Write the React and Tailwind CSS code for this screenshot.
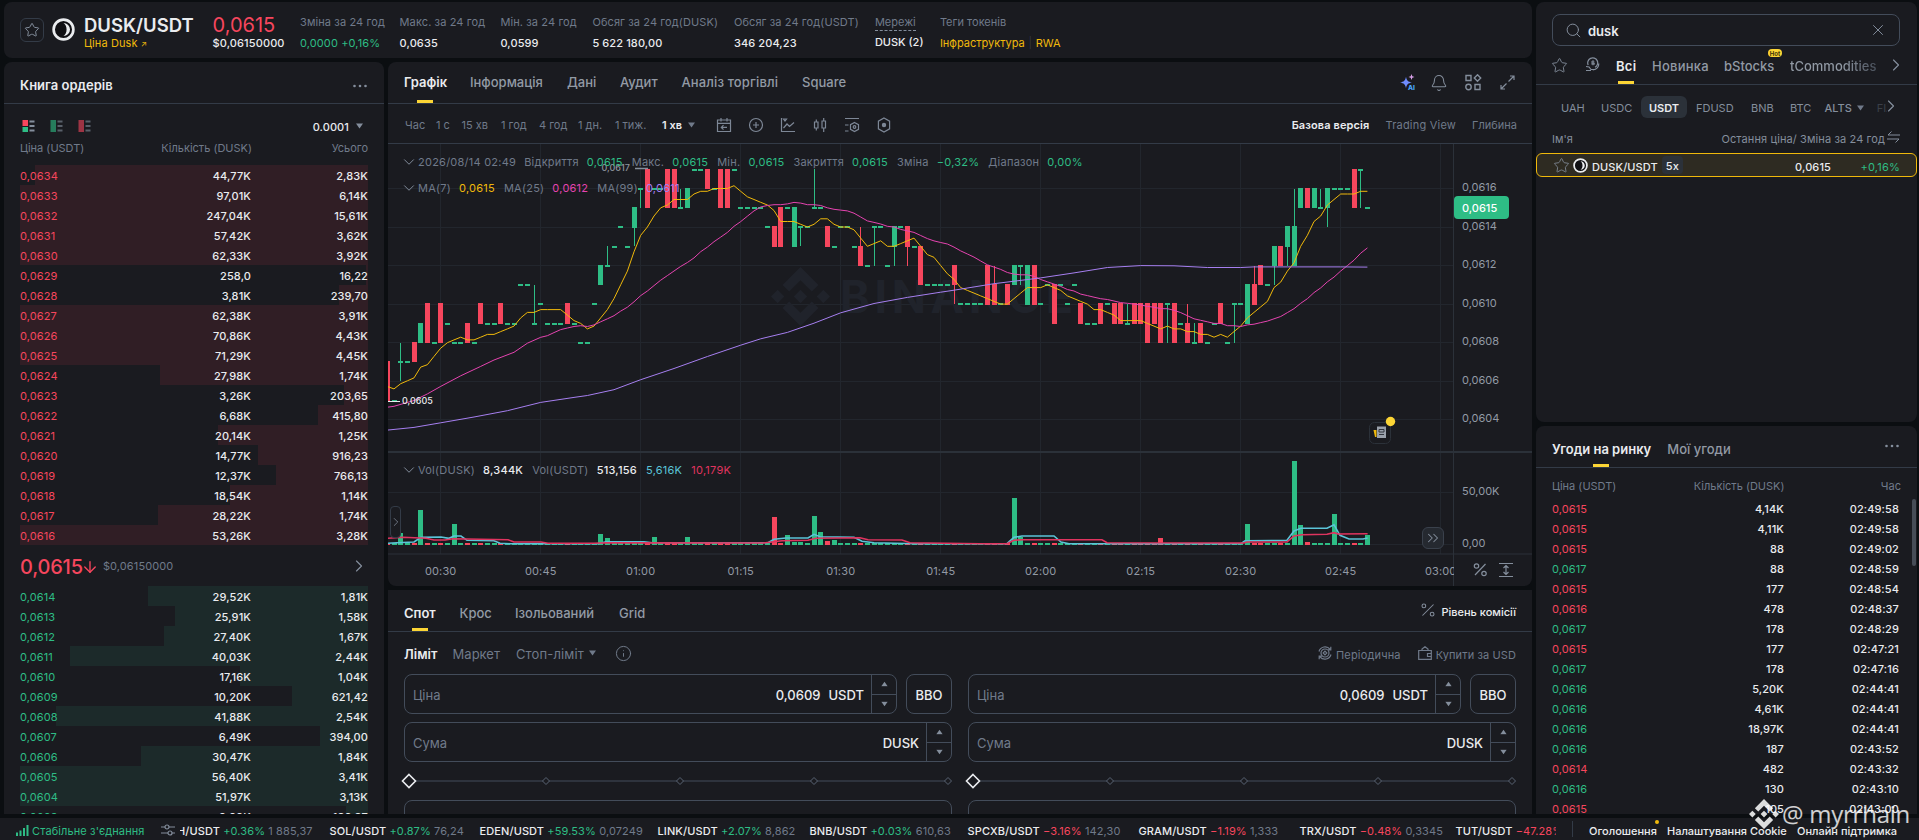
import React from 'react';
import { Star, Search, X, ChevronRight, ChevronDown, ChevronsRight, Bell, Percent, Info, ArrowDown } from 'lucide-react';

const ASKS = [
  ['0,0634', '44,77K', '2,83K', 333], ['0,0633', '97,01K', '6,14K', 348], ['0,0632', '247,04K', '15,61K', 348],
  ['0,0631', '57,42K', '3,62K', 348], ['0,0630', '62,33K', '3,92K', 348], ['0,0629', '258,0', '16,22', 2],
  ['0,0628', '3,81K', '239,70', 29], ['0,0627', '62,38K', '3,91K', 348], ['0,0626', '70,86K', '4,43K', 348],
  ['0,0625', '71,29K', '4,45K', 348], ['0,0624', '27,98K', '1,74K', 208], ['0,0623', '3,26K', '203,65', 24],
  ['0,0622', '6,68K', '415,80', 50], ['0,0621', '20,14K', '1,25K', 150], ['0,0620', '14,77K', '916,23', 110],
  ['0,0619', '12,37K', '766,13', 92], ['0,0618', '18,54K', '1,14K', 138], ['0,0617', '28,22K', '1,74K', 210],
  ['0,0616', '53,26K', '3,28K', 348],
];

const BIDS = [
  ['0,0614', '29,52K', '1,81K', 220], ['0,0613', '25,91K', '1,58K', 193], ['0,0612', '27,40K', '1,67K', 204],
  ['0,0611', '40,03K', '2,44K', 298], ['0,0610', '17,16K', '1,04K', 128], ['0,0609', '10,20K', '621,42', 76],
  ['0,0608', '41,88K', '2,54K', 312], ['0,0607', '6,49K', '394,00', 48], ['0,0606', '30,47K', '1,84K', 227],
  ['0,0605', '56,40K', '3,41K', 348], ['0,0604', '51,97K', '3,13K', 348], ['0,0603', '3,00K', '180,87', 22],
];

const TRADES = [
  ['0,0615', '4,14K', '02:49:58', 's'], ['0,0615', '4,11K', '02:49:58', 's'], ['0,0615', '88', '02:49:02', 's'],
  ['0,0617', '88', '02:48:59', 'b'], ['0,0615', '177', '02:48:54', 's'], ['0,0616', '478', '02:48:37', 's'],
  ['0,0617', '178', '02:48:29', 'b'], ['0,0615', '177', '02:47:21', 's'], ['0,0617', '178', '02:47:16', 'b'],
  ['0,0616', '5,20K', '02:44:41', 'b'], ['0,0616', '4,61K', '02:44:41', 'b'], ['0,0616', '18,97K', '02:44:41', 'b'],
  ['0,0616', '187', '02:43:52', 'b'], ['0,0614', '482', '02:43:32', 's'], ['0,0616', '130', '02:43:10', 'b'],
  ['0,0615', '105', '02:43:00', 's'],
];

const TICKERS = [
  ['SOL/USDT', '+0.87%', '76,24', 'w-[150px]'], ['EDEN/USDT', '+59.53%', '0,07249', 'w-[178px]'],
  ['LINK/USDT', '+2.07%', '8,862', 'w-[152px]'], ['BNB/USDT', '+0.03%', '610,63', 'w-[158px]'],
  ['SPCXB/USDT', '−3.16%', '142,30', 'w-[171px]'], ['GRAM/USDT', '−1.19%', '1,333', 'w-[161px]'],
  ['TRX/USDT', '−0.48%', '0,3345', 'w-[156px]'], ['TUT/USDT', '−47.28%', '0,0101', 'w-[160px]'],
];

// [minute, open, close, high?, low?], prices in 0.0001 USDT
const CANDLES = [
  [22, 607, 605], [23, 605, 605], [24, 607, 607, 608, 606], [25, 607, 607], [26, 608, 607], [27, 608, 609],
  [28, 610, 608], [29, 608, 608], [30, 610, 608], [31, 609, 609], [32, 608, 608], [33, 608, 608], [34, 609, 608],
  [35, 608, 608], [36, 610, 609], [37, 609, 609], [38, 609, 609], [39, 610, 609], [40, 609, 609], [41, 609, 609],
  [42, 611, 611], [43, 611, 611], [44, 609, 609, 611], [45, 610, 610], [46, 609, 609], [47, 609, 609],
  [48, 609, 609], [49, 610, 609], [50, 609, 609], [51, 608, 608], [52, 608, 608], [53, 610, 610], [54, 611, 612],
  [55, 612, 612, 613], [56, 613, 613], [57, 614, 614], [58, 613, 613], [59, 614, 615, 615, 613],
  [60, 616, 616, 616, 615], [61, 617, 615], [62, 616, 616], [63, 616, 616], [64, 617, 615], [65, 617, 615],
  [66, 615, 615, 616], [67, 615, 616], [68, 617, 617], [69, 617, 617], [70, 617, 616], [71, 616, 616],
  [72, 617, 615], [73, 617, 615], [74, 617, 617], [75, 615, 615], [76, 615, 615], [77, 615, 615], [78, 615, 615],
  [79, 614, 614], [80, 614, 613], [81, 615, 613], [82, 615, 615], [83, 613, 615], [84, 614, 614, 614, 613],
  [85, 614, 614], [86, 615, 615, 617], [87, 615, 615], [88, 614, 613], [89, 613, 613], [90, 614, 614],
  [91, 614, 614], [92, 613, 613], [93, 613, 612, 614], [94, 612, 612], [95, 614, 614, 614, 612], [96, 614, 614],
  [97, 612, 612], [98, 613, 614, 614, 612], [99, 614, 614], [100, 614, 613, 614, 612], [101, 613, 613],
  [102, 613, 611], [103, 611, 611], [104, 611, 611], [105, 611, 611], [106, 611, 611], [107, 612, 611, 612, 610],
  [108, 610, 610], [109, 610, 610], [110, 610, 610], [111, 610, 610], [112, 612, 610], [113, 611, 610, 612],
  [114, 610, 610], [115, 611, 610], [116, 611, 612], [117, 612, 612, 612, 611], [118, 610, 612], [119, 612, 610],
  [120, 610, 610], [121, 611, 611], [122, 611, 609], [123, 611, 611], [124, 610, 610], [125, 611, 611],
  [126, 610, 609], [127, 609, 609], [128, 609, 609], [129, 610, 609], [130, 610, 610], [131, 610, 609],
  [132, 610, 609], [133, 609, 609, 610], [134, 610, 609], [135, 610, 609], [136, 610, 608], [137, 610, 609],
  [138, 610, 608], [139, 610, 610, 610, 608], [140, 610, 608], [141, 609, 609], [142, 609, 608, 610],
  [143, 608, 608, 609], [144, 609, 608], [145, 608, 608], [146, 609, 609], [147, 610, 609], [148, 608, 608],
  [149, 610, 610, 610, 608], [150, 610, 610], [151, 609, 611], [152, 611, 610, 612], [153, 612, 611],
  [154, 611, 611], [155, 612, 613, 613, 611], [156, 613, 612], [157, 613, 614, 614, 612], [158, 612, 614, 616],
  [159, 615, 616], [160, 616, 615], [161, 615, 616], [162, 615, 615, 616], [163, 615, 616, 616, 614],
  [164, 616, 616], [165, 616, 616], [166, 616, 616], [167, 617, 615], [168, 617, 617, 617, 615], [169, 615, 615],
];

// volume bars that stand out, minute -> [height, red?]
const VOLUME = {
  24: [12], 27: [35], 32: [21.5], 54: [10.7], 55: [7], 62: [8], 67: [8.5], 80: [28, 1], 82: [10], 83: [3.5], 84: [3.5],
  86: [28.7], 87: [12.7], 88: [4, 1], 89: [5], 116: [47.5], 117: [8.5], 138: [7, 1], 151: [21.5], 158: [84],
  159: [20.5], 160: [3, 1], 164: [31.5], 169: [10],
};

const MA25_HEAD = [[22, 604.65], [23, 604.7], [26, 605.0], [28, 605.34], [30, 605.73], [33, 606.28], [36, 606.77], [38, 607.1], [41, 607.5], [43, 607.97], [45, 608.28]];
const MA99 = [[22, 603.46], [26, 603.6], [30, 603.84], [35, 604.14], [40, 604.47], [45, 604.9], [50, 605.16], [52, 605.26], [56, 605.56], [60, 606.08], [65, 606.66], [70, 607.28], [75, 607.87], [78, 608.2], [82, 608.53], [86, 609.01], [90, 609.55], [95, 610.03], [100, 610.35], [105, 610.62], [107, 610.72], [113, 611.06], [120, 611.36], [125, 611.62], [130, 611.9], [135, 612.0], [140, 611.99], [145, 611.9], [150, 611.9], [152, 611.93], [157, 611.93], [165, 611.93], [169, 611.92]];

const VOL_FAST = '0,399.3 9,398.7 26,398 33,393.3 53,393 61,394.3 66,392 73,392 79,396.3 106,396.7 112,399.3 122,399.7 210,399.7 218,397.7 256,397.7 264,398.7 380,398.7 386,395.3 398,394 420,394 426,390.3 432,392.7 466,393.3 474,397.3 486,398.7 528,399.7 619,399.7 626,393.3 634,392 666,392 673,398 681,399.7 853,399.7 857,396.7 899,396.3 906,387 913,384.3 939,384.3 946,380.7 952,391.3 961,395 975,395 979.6,394';
const VOL_SLOW = '0,394.3 15,393.3 38,394.3 46,396 57,396 65,394.7 120,395.7 126,398 153,398 160,399.3 206,399.3 218,398.7 375,399 384,398 394,396.7 420,396.3 428,394.3 472,393.7 480,395.7 514,396 522,398.7 592,399.7 619,399.7 626,396.3 634,395.7 714,395.7 719,398.7 856,399 859,398 899,398 906,392 914,390.7 939,390.3 946,388.7 950,390 979.6,389.7';

const xAt = (t) => 52.7 + (t - 30) * 6.6667;
const yAt = (p) => 44.5 + (616 - p) * 19.27;

const closeAt = (t) => CANDLES[t - 22][2];
const average = (n) => {
  const out = [];
  for (let t = 22 + n - 1; t <= 169; t++) {
    let sum = 0;
    for (let k = 0; k < n; k++) sum += closeAt(t - k);
    out.push([t, sum / n]);
  }
  return out;
};
const toPoints = (list) => list.map(([t, p]) => `${xAt(t).toFixed(1)},${yAt(p).toFixed(1)}`).join(' ');

const MA7 = [[21.8, 605.75], [23, 605.6], [24, 605.87], [25, 606.02], [26, 606.17], [27, 606.73], ...average(7)];
const MA25 = [...MA25_HEAD, ...average(25)];

const Caret = ({ className = '' }) => (
  <svg width="9" height="6" viewBox="0 0 8 6" className={`shrink-0 ${className}`}><path d="M0.5 0.5h7L4 5.5z" fill="currentColor" /></svg>
);

const Dots = () => (
  <svg width="14" height="4" viewBox="0 0 14 4" fill="#848e9c" className="mr-px"><circle cx="1.5" cy="2" r="1.3" /><circle cx="7" cy="2" r="1.3" /><circle cx="12.5" cy="2" r="1.3" /></svg>
);

const DuskLogo = ({ size }) => (
  <svg width={size} height={size} viewBox="0 0 24 24">
    <circle cx="12" cy="12" r="10.3" fill="#101014" stroke="#eaecef" strokeWidth="2.8" />
    <path d="M12 5.2a6.8 6.8 0 0 1 0 13.6c2.2-1.6 3.2-4 3.2-6.8S14.2 6.8 12 5.2z" fill="#eaecef" />
  </svg>
);

const BinanceMark = ({ x, y, size, fill }) => (
  <svg x={x} y={y} width={size} height={size} viewBox="0 0 24 24" fill={fill}>
    <path d="M12 0l7.3 7.3-2.7 2.7L12 5.4 7.4 10 4.7 7.3zM2.7 9.3L5.4 12l-2.7 2.7L0 12zM12 9.3l2.7 2.7-2.7 2.7L9.3 12zM21.3 9.3L24 12l-2.7 2.7L18.6 12zM12 18.6l4.6-4.6 2.7 2.7L12 24l-7.3-7.3L7.4 14z" />
  </svg>
);

const Stat = ({ label, className = '', children }) => (
  <div className={`whitespace-nowrap ${className}`}>
    <div className="text-[#707a8a]">{label}</div>
    <div className="mt-[5px] font-medium text-[#eaecef]">{children}</div>
  </div>
);

const PairHeader = () => (
  <header className="flex h-14 items-start rounded-lg bg-[#1a1b20] pt-3 pl-4 text-[11px] leading-4">
    <button className="mt-1 flex h-6 w-6 items-center justify-center rounded-md border border-[#333b47]">
      <Star size={16} strokeWidth={1.5} className="shrink-0 text-[#848e9c]" />
    </button>
    <div className="mt-1 ml-2 w-6"><DuskLogo size={23} /></div>
    <div className="ml-2 w-[128.6px]">
      <h1 className="-mt-0.5 text-[18.5px] leading-[26px] font-semibold text-[#eaecef]">DUSK/USDT</h1>
      <div className="-mt-[3px] tracking-[0.01em] text-[#f0b90b]">Ціна Dusk <span className="text-[8px]">↗</span></div>
    </div>
    <div className="w-[87.4px]">
      <div className="-mt-0.5 text-[20px] leading-[26px] text-[#f6465d]">0,0615</div>
      <div className="-mt-[3px] font-medium tracking-[0.01em] text-[#eaecef]">$0,06150000</div>
    </div>
    <Stat className="w-[99.6px] tracking-[0.01em]" label="Зміна за 24 год"><span className="font-normal text-[#2ebd85]">0,0000 +0,16%</span></Stat>
    <Stat className="w-[100.8px] tracking-[0.01em]" label="Макс. за 24 год">0,0635</Stat>
    <Stat className="w-[92px] tracking-[0.01em]" label="Мін. за 24 год">0,0599</Stat>
    <Stat className="w-[141.5px] tracking-[0.01em]" label="Обсяг за 24 год(DUSK)">5 622 180,00</Stat>
    <Stat className="w-[141px] tracking-[0.01em]" label="Обсяг за 24 год(USDT)">346 204,23</Stat>
    <div className="w-[65px]">
      <span className="block w-fit border-b border-dashed border-[#848e9c] text-[#707a8a]">Мережі</span>
      <span className="mt-[3px] block font-medium text-[#eaecef]">DUSK (2)</span>
    </div>
    <Stat label="Теги токенів"><span className="font-normal text-[#f0b90b]">Інфраструктура<span className="px-1 font-thin text-[#707a8a]">|</span>RWA</span></Stat>
  </header>
);

const BookRow = ({ row, ask }) => (
  <div className="relative flex h-5 items-center pt-0.5">
    <div className={`absolute inset-y-0 right-0 ${ask ? 'bg-[#301e25]' : 'bg-[#1c2a2a]'}`} style={{ width: row[3] }} />
    <span className={`relative w-24 ${ask ? 'text-[#f6465d]' : 'text-[#2ebd85]'}`}>{row[0]}</span>
    <span className="relative w-[135px] text-right font-medium">{row[1]}</span>
    <span className="relative flex-1 text-right font-medium">{row[2]}</span>
  </div>
);

const BookIcon = ({ top, bottom, dim }) => (
  <svg width="13" height="13" viewBox="0 0 13 13" className={dim ? 'opacity-60' : ''}>
    <rect x="0.5" y="0" width="5.5" height="6" fill={top} /><rect x="0.5" y={dim ? 6 : 7} width="5.5" height={dim ? 6 : 5} fill={bottom} />
    <path d="M7.5 1.5h5M7.5 6h5M7.5 10.5h5" stroke="#848e9c" strokeWidth="2" />
  </svg>
);

const OrderBook = () => (
  <section className="h-[752px] w-[380px] overflow-hidden rounded-t-lg bg-[#1a1b20] text-[11px] tracking-[0.01em] text-[#eaecef]">
    <div className="flex h-[42px] items-center justify-between border-b border-[#333b47] px-4 pt-[7px]">
      <h2 className="text-[13px] font-semibold tracking-normal">Книга ордерів</h2>
      <Dots />
    </div>
    <div className="px-4">
      <div className="flex h-[29px] items-end gap-[15px] pl-0.5">
        <BookIcon top="#f6465d" bottom="#2ebd85" />
        <BookIcon top="#2ebd85" bottom="#2ebd85" dim />
        <BookIcon top="#f6465d" bottom="#f6465d" dim />
        <span className="-mb-0.5 ml-auto flex items-center pr-1 font-medium">0.0001 <Caret className="mb-0.5 ml-1.5 text-[#848e9c]" /></span>
      </div>
      <div className="mt-1 mb-[5px] flex h-[23px] items-center tracking-normal text-[#707a8a]">
        <span className="w-24">Ціна (USDT)</span>
        <span className="w-[136px] text-right">Кількість (DUSK)</span>
        <span className="flex-1 text-right">Усього</span>
      </div>
      <div>{ASKS.map((r) => <BookRow key={r[0]} row={r} ask />)}</div>
      <div className="flex h-[41px] items-center pt-0.5">
        <span className="text-[20px] font-medium tracking-[-0.01em] text-[#f6465d]">0,0615</span>
        <ArrowDown size={18} strokeWidth={1.8} className="-mx-0.5 text-[#f6465d]" />
        <span className="ml-1.5 tracking-[0.01em] text-[#707a8a]">$0,06150000</span>
        <ChevronRight size={20} strokeWidth={1.4} className="-mr-px mb-0.5 ml-auto text-[#848e9c]" />
      </div>
      <div>{BIDS.map((r) => <BookRow key={r[0]} row={r} />)}</div>
    </div>
  </section>
);

const Tab = ({ active, className = '', bar = 'left-3', children }) => (
  <span className={`relative whitespace-nowrap ${active ? 'font-semibold text-[#eaecef]' : 'font-medium text-[#929aa5]'} ${className}`}>
    {children}
    {active && <i className={`absolute h-[3px] w-4 bg-[#fcd535] ${bar}`} />}
  </span>
);

const ToolIcon = ({ children }) => (
  <svg width="16" height="16" viewBox="0 0 16 16" fill="none" stroke="#7d8796" strokeWidth="1.2">{children}</svg>
);

const ChartTools = () => (
  <div className="ml-5 flex items-center gap-4 pb-0.5">
    <ToolIcon><path d="M1.5 3h13v11.5h-13zM1.5 6.3h13M5 1v3.5M11 1v3.5M11 10.4H5.5M7.5 8.2L5.3 10.4l2.2 2.2" /></ToolIcon>
    <ToolIcon><circle cx="8" cy="8" r="6.5" /><path d="M8 5v6M5 8h6" /></ToolIcon>
    <ToolIcon><path d="M1.5 1v13.5H15M3.5 11L7 7l2.500 2.500L14 5.500M3.500 2h3L5 4z" /></ToolIcon>
    <ToolIcon><path d="M2.5 5H6v6H2.5zM4.300 2.500V5M4.300 11v2.500M10 4h3.500v7H10zM11.700 1v3M11.700 11v4" /></ToolIcon>
    <ToolIcon><path d="M1 1.5h14M1 8h3.500M1 14h3.500M10.500 5.500l4 2.200v4.600l-4 2.200-4-2.200V7.700z" /><circle cx="10.5" cy="10" r="1.3" /></ToolIcon>
    <ToolIcon><path d="M8 .9l5.600 3.300v7.600L8 15.100l-5.600-3.300V4.200z" /><circle cx="8" cy="8" r="1.6" fill="#7d8796" /></ToolIcon>
  </div>
);

const Legend = ({ label, value, className = 'text-[#2ebd85]' }) => (
  <><span className="mr-2 text-[#707a8a]">{label}</span><span className={`mr-[9px] ${className}`}>{value}</span></>
);

const LegendRow = ({ className, children }) => (
  <div className={`absolute left-4 flex h-[18px] items-center text-[11px] tracking-[0.022em] whitespace-nowrap ${className}`}>
    <ChevronDown size={18} strokeWidth={1.3} className="-ml-1 text-[#848e9c]" />
    {children}
  </div>
);

const Chart = () => {
  const times = ['00:30', '00:45', '01:00', '01:15', '01:30', '01:45', '02:00', '02:15', '02:30', '02:45', '03:00'];
  const prices = ['0,0616', '0,0614', '0,0612', '0,0610', '0,0608', '0,0606', '0,0604'];
  return (
    <div className="relative h-[442px]">
      <svg width="1144" height="442" viewBox="0 0 1144 442" fontFamily="Inter, sans-serif" fontSize="11">
        <defs>
          <clipPath id="plot"><rect x="0" y="0" width="1066" height="442" /></clipPath>
        </defs>
        <g stroke="#22262d" strokeWidth="1">
          {times.map((t, i) => <line key={t} x1={52.5 + i * 100} x2={52.5 + i * 100} y1="0" y2="410" />)}
          {prices.map((p, i) => <line key={p} x1="0" x2="1066" y1={44.5 + Math.round(i * 38.54)} y2={44.5 + Math.round(i * 38.54)} />)}
          <line x1="0" x2="1066" y1="348.5" y2="348.5" />
          <line x1="0" x2="1066" y1="400.5" y2="400.5" />
        </g>
        <BinanceMark x="383" y="123" size="59" fill="#20232b" />
        <text x="452" y="169" fontSize="45" fontWeight="700" textLength="233" fill="#20232b">BINANCE</text>

        <g clipPath="url(#plot)" shapeRendering="crispEdges">
          {CANDLES.map(([t, o, c, h = Math.max(o, c), l = Math.min(o, c)]) => {
            const color = c < o ? '#f6465d' : '#2ebd85';
            const top = yAt(Math.max(o, c));
            const x = xAt(t);
            return (
              <g key={t} fill={color}>
                {h !== l && <rect x={x - 0.5} y={yAt(h)} width="1" height={yAt(l) - yAt(h)} />}
                <rect x={x - 2.5} y={top - 0.7} width="5" height={Math.max(2, yAt(Math.min(o, c)) - top + 1.2)} />
              </g>
            );
          })}
          {CANDLES.map(([t, o, c]) => {
            const [h, red] = VOLUME[t] || [2];
            const isRed = VOLUME[t] ? red : c < o;
            return <rect key={t} x={xAt(t) - 2.5} y={401 - h} width="5" height={h} fill={isRed ? '#f6465d' : '#2ebd85'} />;
          })}
        </g>
        <g fill="none" strokeWidth="1" clipPath="url(#plot)">
          <polyline points={toPoints(MA7)} stroke="#f0b90b" />
          <polyline points={toPoints(MA25)} stroke="#e544b0" />
          <polyline points={toPoints(MA99)} stroke="#a67ff0" />
          <polyline points={VOL_FAST} stroke="#5bc4d8" strokeWidth="1.6" />
          <polyline points={VOL_SLOW} stroke="#e0345f" strokeWidth="1.6" />
        </g>

        <path d="M247 24.5h13" stroke="#848e9c" strokeWidth="1.5" />
        <text x="213.5" y="27" fontSize="9" fontWeight="500" fill="#8d939c">0,0617</text>
        <path d="M0 257.5h12" stroke="#eaecef" />
        <text x="14" y="260" fontSize="9" fontWeight="500" fill="#eaecef">0,0605</text>

        <rect x="0" y="307" width="1144" height="2" fill="#2b3139" />
        <rect x="0" y="409.5" width="1144" height="1" fill="#2b3139" />
        <rect x="1065" y="0" width="1" height="442" fill="#2b3139" />

        <g fill="#929aa5">
          {prices.map((p, i) => <text key={p} x="1074" y={47.3 + i * 38.5}>{p}</text>)}
          <text x="1074" y="351">50,00K</text>
          <text x="1074" y="403">0,00</text>
          <g clipPath="url(#plot)">
            {times.map((t, i) => <text key={t} x={52.7 + i * 100} y="431" textAnchor="middle" letterSpacing="0.15">{t}</text>)}
          </g>
        </g>
        <rect x="1066" y="52" width="55" height="23" rx="4" fill="#2ebd85" />
        <text x="1074" y="68.3" fontWeight="500" fill="#fff">0,0615</text>
        <g stroke="#848e9c" strokeWidth="1.2" fill="none">
          <circle cx="1088.5" cy="422" r="2.2" /><circle cx="1096" cy="429.5" r="2.2" /><path d="M1097.5 420L1087 431" />
          <path d="M1111 419.5h14M1111 432.5h14M1118 421.5v9M1115.5 424l2.500-2.500 2.500 2.500M1115.5 428l2.500 2.500 2.500-2.500" />
        </g>
        <rect x="981.5" y="278.5" width="21" height="21" rx="5" fill="#1a1b20" stroke="#2b3139" />
        <path d="M985.5 286h3v7H987z" fill="#f0b90b" />
        <path d="M989 282.5h9V294h-9z" fill="#9aa1ab" /><path d="M991 285.5h5v2.500h-5zM991 290.5h5" stroke="#33373f" fill="none" />
        <circle cx="1002.5" cy="277.5" r="4.7" fill="#fcd535" />
      </svg>

      <LegendRow className="top-[9px]">
        <span className="mr-2 text-[#707a8a]">2026/08/14 02:49</span>
        <Legend label="Відкриття" value="0,0615" />
        <Legend label="Макс." value="0,0615" />
        <Legend label="Мін." value="0,0615" />
        <Legend label="Закриття" value="0,0615" />
        <Legend label="Зміна" value="−0,32%" />
        <Legend label="Діапазон" value="0,00%" />
      </LegendRow>
      <LegendRow className="top-[35px]">
        <Legend label="MA(7)" value="0,0615" className="text-[#f0b90b]" />
        <Legend label="MA(25)" value="0,0612" className="text-[#e544b0]" />
        <Legend label="MA(99)" value="0,0611" className="text-[#a67ff0]" />
      </LegendRow>
      <LegendRow className="top-[317px]">
        <Legend label="Vol(DUSK)" value="8,344K" className="font-medium text-[#eaecef]" />
        <Legend label="Vol(USDT)" value="513,156" className="font-medium text-[#eaecef]" />
        <span className="mr-[9px] text-[#5bc4d8]">5,616K</span>
        <span className="text-[#e0345f]">10,179K</span>
      </LegendRow>
      <button className="absolute top-[362px] left-0.5 flex h-8 w-[11px] items-center justify-center rounded border border-[#333b47] bg-[#1a1b20]">
        <ChevronRight size={14} strokeWidth={1.3} className="shrink-0 text-[#848e9c]" />
      </button>
      <button className="absolute top-[383px] left-[1034px] flex h-[22px] w-[22px] items-center justify-center rounded-md border border-[#3a414c] bg-[#252930]">
        <ChevronsRight size={18} strokeWidth={1.4} className="shrink-0 text-[#848e9c]" />
      </button>
    </div>
  );
};

const ChartPanel = () => (
  <section className="h-[524px] overflow-hidden rounded-lg bg-[#1a1b20]">
    <div className="flex h-[42px] items-center gap-6 border-b border-[#333b47] pr-[17px] pl-4 text-[13px]">
      <Tab active className="w-[42px]" bar="left-[13px] top-[27px]">Графік</Tab>
      <Tab className="w-[73px]">Інформація</Tab>
      <Tab className="w-[29px]">Дані</Tab>
      <Tab className="w-[37.5px]">Аудит</Tab>
      <Tab className="w-[96.5px] tracking-[0.01em]">Аналіз торгівлі</Tab>
      <Tab>Square</Tab>
      <div className="ml-auto flex items-center text-[#848e9c]">
        <svg width="17" height="17" viewBox="0 0 17 17">
          <path d="M7 2.5c.6 4 2 5.400 6 6-4 .6-5.400 2-6 6-.6-4-2-5.400-6-6 4-.6 5.400-2 6-6z" fill="#6f8cff" />
          <path d="M12.5 0l.8 2.200 2.200.8-2.200.8-.8 2.200-.8-2.200-2.200-.8 2.200-.8z" fill="#d9a1e8" />
          <text x="9" y="15.5" fontSize="6.5" fontWeight="800" fill="#4aa8ff">AI</text>
        </svg>
        <Bell size={18} strokeWidth={1.4} className="ml-[14px]" />
        <svg width="18" height="17" viewBox="0 0 18 17" fill="none" stroke="currentColor" strokeWidth="1.4" className="ml-4">
          <path d="M2 1.5h5v5H2zM11 10.5h5v5h-5zM13.500 .8l3.200 3.200-3.200 3.200L10.300 4z" /><circle cx="4.5" cy="13" r="2.7" />
        </svg>
        <svg width="15" height="15" viewBox="0 0 15 15" fill="none" stroke="currentColor" strokeWidth="1.2" className="ml-[18px]">
          <path d="M10 1h4v4M14 1L8.500 6.500M5 14H1v-4M1 14l5.500-5.500" />
        </svg>
      </div>
    </div>
    <div className="flex h-10 items-center border-b border-[#333b47] pt-1 pr-[15px] pl-[17px] text-[11px] whitespace-nowrap text-[#707a8a]">
      <span className="w-[31px]">Час</span>
      <span className="w-[25.5px]">1 с</span>
      <span className="w-[39.5px]">15 хв</span>
      <span className="w-[38px]">1 год</span>
      <span className="w-[39px]">4 год</span>
      <span className="w-[37px]">1 дн.</span>
      <span className="w-[47px]">1 тиж.</span>
      <span className="font-semibold text-[#eaecef]">1 хв</span>
      <Caret className="mb-0.5 ml-[5px]" />
      <ChartTools />
      <span className="ml-auto font-semibold tracking-[0.01em] text-[#eaecef]">Базова версія</span>
      <span className="ml-4 tracking-[0.02em]">Trading View</span>
      <span className="ml-4">Глибина</span>
    </div>
    <Chart />
  </section>
);

const Stepper = () => (
  <div className="flex h-full w-[25px] flex-col border-l border-[#434c5a] text-[#848e9c]">
    <div className="flex flex-1 items-center justify-center border-b border-[#434c5a]"><Caret className="scale-90 rotate-180" /></div>
    <div className="flex flex-1 items-center justify-center"><Caret className="scale-90" /></div>
  </div>
);

const Field = ({ label, value, unit, className = '' }) => (
  <div className={`flex h-10 flex-1 items-center rounded-lg border border-[#434c5a] pl-2 ${className}`}>
    <span className="pt-1 text-[#707a8a]">{label}</span>
    <span className="ml-auto pt-1 font-medium">{value}</span>
    <span className="mr-[7px] ml-2 pt-1 font-medium">{unit}</span>
    <Stepper />
  </div>
);

const OrderForm = () => (
  <div className="flex-1">
    <div className="flex gap-[9px]">
      <Field label="Ціна" value="0,0609" unit="USDT" />
      <button className="h-10 w-[46px] rounded-lg border border-[#434c5a] pt-1 font-medium">BBO</button>
    </div>
    <Field label="Сума" unit="DUSK" className="mt-2" />
    <svg width="548" height="16" viewBox="0 0 548 16" className="mt-[11px] block overflow-visible" fill="#1a1b20">
      <path d="M6 8h538" stroke="#434c5a" />
      {[142, 276, 410, 544].map((x) => <path key={x} d={`M${x} 4.5l3.5 3.5-3.5 3.5-3.5-3.5z`} stroke="#5a6473" />)}
      <path d="M5 1.5L11.5 8 5 14.5-1.5 8z" stroke="#eaecef" strokeWidth="1.6" />
    </svg>
    <div className="mt-[11px] h-10 rounded-lg border border-[#434c5a]" />
  </div>
);

const TradePanel = () => (
  <section className="h-[224px] overflow-hidden bg-[#1a1b20] text-[13px] text-[#eaecef]">
    <div className="flex h-[42px] items-center gap-6 border-b border-[#333b47] pt-[7px] pr-4 pl-4">
      <Tab active className="w-[31.5px]" bar="left-2 top-[24px]">Спот</Tab>
      <Tab className="w-[31.5px]">Крос</Tab>
      <Tab className="w-20">Ізольований</Tab>
      <Tab>Grid</Tab>
      <span className="-mt-1 ml-auto flex items-center text-[11px] font-medium"><Percent size={18} strokeWidth={1.4} className="mr-1 -mt-1 text-[#848e9c]" />Рівень комісії</span>
    </div>
    <div className="flex h-[42px] items-center px-4 pt-1 text-[#707a8a]">
      <span className="w-[48.6px] font-semibold text-[#eaecef]">Ліміт</span>
      <span className="w-[63.4px]">Маркет</span>
      <span className="tracking-[0.01em]">Стоп-ліміт</span>
      <Caret className="mb-1 ml-1" />
      <Info size={17} strokeWidth={1.4} className="mb-1 ml-[18px]" />
      <div className="ml-auto flex items-center text-[11px]">
        <svg width="14" height="14" viewBox="0 0 14 14" fill="none" stroke="currentColor" strokeWidth="1.2" className="mb-1">
          <circle cx="7" cy="7" r="4" /><path d="M7 5.2L8.8 7 7 8.8 5.2 7zM1 5.5A6.3 6.3 0 0 1 12 3.2M12.8.8v3H10M13 8.500a6.300 6.300 0 0 1-11 2.300M1.200 13.200v-3H4" />
        </svg>
        <span className="ml-1 tracking-[0.015em]">Періодична</span>
        <svg width="14" height="14" viewBox="0 0 14 14" fill="none" stroke="currentColor" strokeWidth="1.2" className="mb-1 ml-[17px]">
          <path d="M.7 4.5h12.600v8.800H.7zM13.300 7.500H9.500v3h3.800M4 4.500V3L7 .7 10 3v1.500" />
        </svg>
        <span className="ml-1 tracking-[0.01em]">Купити за USD</span>
      </div>
    </div>
    <div className="flex gap-4 px-4">
      <OrderForm />
      <OrderForm />
    </div>
  </section>
);

const Markets = () => (
  <section className="h-[420px] overflow-hidden rounded-lg bg-[#1a1b20] pt-3 text-[11px] text-[#848e9c]">
    <div className="mr-[17px] ml-4 flex h-8 items-center rounded-lg border border-[#434c5a] px-3">
      <Search size={17} strokeWidth={1.4} />
      <span className="ml-1.5 pt-1 text-[13px] font-semibold text-[#eaecef]">dusk</span>
      <X size={18} strokeWidth={1.3} className="ml-auto" />
    </div>
    <div className="flex h-[39px] items-center border-b border-[#333b47] pt-1 pl-4 text-[13px]">
      <Star size={17} strokeWidth={1.3} className="-ml-px mb-1" />
      <svg width="15" height="15" viewBox="0 0 15 15" fill="none" stroke="currentColor" strokeWidth="1.2" className="mb-1.5 ml-[17px]">
        <path d="M3.2 8A5 5 0 1 1 10 10.300" /><path d="M8 3.200v5M6 5h3.500M10 6.800H6.300M13.800 6.500c0 4-3 6-6 6.500M1 9.500l3 .5 2 2.500h3M1 13.500h5" />
      </svg>
      <Tab active className="ml-4 w-9 tracking-[0.02em]" bar="left-0.5 top-[24px]">Всі</Tab>
      <Tab className="w-[72px] tracking-[0.02em]">Новинка</Tab>
      <Tab className="w-[66px]">bStocks
        <b className="absolute -top-2 left-11 flex h-2 w-[14px] items-center justify-center rounded-sm bg-[#fcd535] text-[6px] text-[#3b2f05]">Hot</b>
      </Tab>
      <span className="bg-gradient-to-r from-[#929aa5] from-60% to-[#4a515c] bg-clip-text font-medium text-transparent">tCommodities</span>
      <ChevronRight size={20} strokeWidth={1.4} className="mb-1 ml-2.5" />
    </div>
    <div className="flex h-[45px] items-center pt-0.5 pl-[25px] whitespace-nowrap">
      <span className="w-10">UAH</span>
      <span className="w-10">USDC</span>
      <span className="mb-1 flex h-[22px] w-[46px] items-center justify-center rounded-md bg-[#2b3139] pt-1 font-semibold text-[#eaecef]">USDT</span>
      <span className="ml-[9px] w-[55px]">FDUSD</span>
      <span className="w-[39px]">BNB</span>
      <span className="w-[34.5px]">BTC</span>
      <span className="font-medium">ALTS</span>
      <Caret className="mb-0.5 ml-1 text-[#707a8a]" />
      <span className="ml-3 w-2.5 overflow-hidden text-[#3a3f49]">FIA</span>
      <ChevronRight size={20} strokeWidth={1.4} className="mb-1.5 -ml-1.5" />
    </div>
    <div className="-mt-px flex h-5 items-center pr-[17px] pl-4">
      <span>Ім'я</span>
      <span className="ml-auto tracking-[0.01em]">Остання ціна/ Зміна за 24 год</span>
      <svg width="13" height="12" viewBox="0 0 13 12" fill="none" stroke="currentColor" className="mb-1 ml-0.5"><path d="M13 4H1L4.500 .5M0 8h12l-3.500 3.500" /></svg>
    </div>
    <div className="mt-1 flex h-6 items-center rounded-md border border-[#f0b90b] bg-[#2e2b22] pr-4 pl-4 text-[#eaecef]">
      <Star size={17} strokeWidth={1.2} className="text-[#848e9c]" />
      <span className="ml-[3px]"><DuskLogo size={15} /></span>
      <span className="ml-1 pt-1 font-medium tracking-[0.01em]">DUSK/USDT</span>
      <span className="ml-1 rounded-sm bg-[#2b3139] px-1 pt-0.5 leading-4 font-medium">5x</span>
      <span className="ml-auto w-20 pt-1 text-right font-medium tracking-[0.01em]">0,0615</span>
      <span className="w-[69px] pt-1 text-right tracking-[0.02em] text-[#2ebd85]">+0,16%</span>
    </div>
  </section>
);

const Trades = () => (
  <section className="relative h-[388px] overflow-hidden rounded-t-lg bg-[#1a1b20] text-[11px] text-[#eaecef]">
    <div className="flex h-[42px] items-center border-b border-[#333b47] pt-[7px] pr-[17px] pl-4 text-[13px]">
      <Tab active className="mr-4" bar="left-[41px] top-[24px]">Угоди на ринку</Tab>
      <Tab>Мої угоди</Tab>
      <span className="mb-2 ml-auto"><Dots /></span>
    </div>
    <div className="px-4">
      <div className="flex h-[31px] items-center pt-1.5 text-[#707a8a]">
        <span className="w-24">Ціна (USDT)</span>
        <span className="w-[136.5px] text-right">Кількість (DUSK)</span>
        <span className="flex-1 text-right">Час</span>
      </div>
      {TRADES.map((r, i) => (
        <div key={i} className="flex h-5 items-center pt-px tracking-[0.01em]">
          <span className={r[3] === 's' ? 'w-24 text-[#f6465d]' : 'w-24 text-[#2ebd85]'}>{r[0]}</span>
          <span className="w-[136px] text-right font-medium">{r[1]}</span>
          <span className="flex-1 pr-0.5 text-right font-medium">{r[2]}</span>
        </div>
      ))}
    </div>
    <div className="absolute top-[73px] right-px h-[67px] w-1 rounded-full bg-[#474d57]" />
  </section>
);

const StatusBar = () => (
  <footer className="mt-1 flex h-[22px] items-center bg-[#1a1b20] pt-1 pl-4 text-[11px] whitespace-nowrap text-[#eaecef]">
    <svg width="13" height="11" viewBox="0 0 13 11" fill="#2ebd85" className="mb-0.5"><path d="M0 7.5h2V11H0zM3.5 5.5h2V11h-2zM7 3h2v8H7zM10.5 0h2v11h-2z" /></svg>
    <span className="ml-[3px] w-[129px] tracking-[0.01em] text-[#2ebd85]">Стабільне з'єднання</span>
    <svg width="14" height="12" viewBox="0 0 14 12" fill="none" stroke="#848e9c" strokeWidth="1.2" className="mb-0.5"><path d="M0 3h4M8 3h6M0 9h7M11 9h3" /><circle cx="6" cy="3" r="2" /><circle cx="9" cy="9" r="2" /></svg>
    <div className="ml-[5px] flex w-[1376px] overflow-hidden">
      <span className="-ml-[3px] w-[152.5px] shrink-0 tracking-[0.01em]"><b className="font-medium">H/USDT</b> <span className="text-[#2ebd85]">+0.36%</span> <span className="text-[#707a8a]">1 885,37</span></span>
      {TICKERS.map(([pair, change, price, w]) => (
        <span key={pair} className={`shrink-0 tracking-[0.01em] ${w}`}>
          <b className="font-medium">{pair}</b>{' '}
          <span className={change[0] === '+' ? 'text-[#2ebd85]' : 'text-[#f6465d]'}>{change}</span>{' '}
          <span className="text-[#707a8a]">{price}</span>
        </span>
      ))}
    </div>
    <div className="mb-1 ml-4 h-4 w-px bg-[#333b47]" />
    <span className="relative ml-4 w-[78px] font-medium">Оголошення<i className="absolute -top-[3px] left-[66px] h-1 w-1 rounded-full bg-[#f0b90b]" /></span>
    <span className="w-[130px] font-medium">Налаштування Cookie</span>
    <span className="font-medium">Онлайн підтримка</span>
  </footer>
);

export default function App() {
  return (
    <div className="relative h-[840px] w-[1919px] overflow-hidden bg-[#0b0e11] pt-0.5 font-[Inter,sans-serif]">
      <div className="flex gap-1 pl-1">
        <div className="flex flex-col gap-1">
          <PairHeader />
          <div className="flex gap-1">
            <OrderBook />
            <div className="flex w-[1144px] flex-col gap-1">
              <ChartPanel />
              <TradePanel />
            </div>
          </div>
        </div>
        <div className="flex w-[381px] flex-col gap-1">
          <Markets />
          <Trades />
        </div>
      </div>
      <StatusBar />

      <div className="absolute top-[798px] left-[1749px] flex items-center text-[24px] leading-8 text-white/80">
        <svg width="30" height="30"><BinanceMark size="30" fill="rgba(255,255,255,0.85)" /></svg>
        <span className="ml-[3px] font-['Open_Sans',sans-serif] tracking-[-0.01em]">@ myrrhain</span>
      </div>
    </div>
  );
}
